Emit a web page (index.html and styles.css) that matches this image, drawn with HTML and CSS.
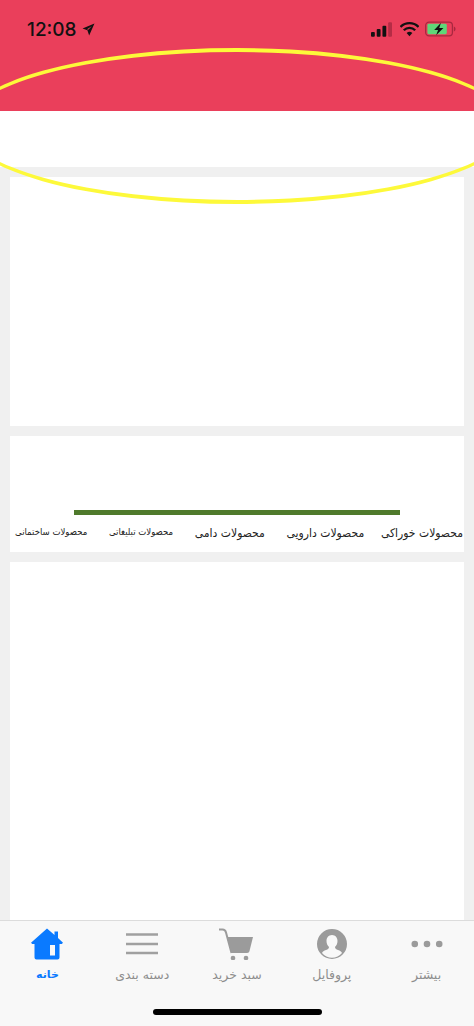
FILE: index.html
```html
<!DOCTYPE html>
<html lang="fa">
<head>
    <meta charset="UTF-8">
    <meta name="viewport" content="width=device-width, initial-scale=1.0">
    <title>Home</title>
    <link rel="stylesheet" href="styles.css">
</head>
<body>

<div class="screen">
    <!-- Red header with status bar -->
    <header class="header">
        <div class="status-bar">
            <div class="status-left">
                <span class="clock">12:08</span>
                <svg class="arrow" viewBox="0 0 12 12"><path d="M11.500 .5 .5 5 5 6.600 6.600 11.500Z M9 3 4.600 5.700 5.800 6.300Z" fill="#111" fill-rule="evenodd"/></svg>
            </div>
            <div class="status-right">
                <svg class="signal" viewBox="0 0 22 15">
                    <rect x="0" y="10" width="4" height="5" rx="1" fill="#111"/>
                    <rect x="6" y="7" width="4" height="8" rx="1" fill="#111"/>
                    <rect x="12" y="3.500" width="4" height="11.500" rx="1" fill="#111"/>
                    <rect x="18" y="0" width="4" height="15" rx="1" fill="#b52c45"/>
                </svg>
                <svg class="wifi" viewBox="0 0 20 15">
                    <path d="M.5 4.800A13.500 13.500 0 0 1 19.500 4.800" fill="none" stroke="#111" stroke-width="2.400"/>
                    <path d="M4 8.300A8.500 8.500 0 0 1 16 8.300" fill="none" stroke="#111" stroke-width="2.400"/>
                    <path d="M7 11.300 10 14.500 13 11.300A4.300 4.300 0 0 0 7 11.300Z" fill="#111"/>
                </svg>
                <svg class="battery" viewBox="0 0 32 16">
                    <rect x=".7" y="1" width="27.600" height="14" rx="3.500" fill="none" stroke="#a8283f" stroke-width="1.300"/>
                    <rect x="2.500" y="2.700" width="20" height="10.600" rx="1.500" fill="#5fd778"/>
                    <path d="M29.800 5.500C31 6 31.500 7 31.500 8S31 10 29.800 10.500Z" fill="#a8283f"/>
                    <path d="M16.500 1.500 9.500 9H13.500L11.500 14.500 19 7H14.700Z" fill="#111"/>
                </svg>
            </div>
        </div>
    </header>

    <div class="search-strip"></div>

    <main class="content">
        <section class="card card-slider"></section>

        <section class="card card-categories">
            <div class="green-bar"></div>
            <div class="categories">
                <span class="category">محصولات خوراکی</span>
                <span class="category">محصولات دارویی</span>
                <span class="category">محصولات دامی</span>
                <span class="category small">محصولات تبلیغاتی</span>
                <span class="category small">محصولات ساختمانی</span>
            </div>
        </section>

        <section class="card card-list"></section>
    </main>

    <!-- Bottom tabs -->
    <nav class="tabbar">
        <div class="tab active">
            <svg viewBox="0 0 32 32"><path d="M16 .500 23.500 7V3.500H27V10L32 14.800 30.800 16H28.500V29.500A2 2 0 0 1 26.500 31.500H5.500A2 2 0 0 1 3.500 29.500V16H1.200L0 14.800Z M19 17V27.500H24V17Z" fill="#0a7aff" fill-rule="evenodd"/></svg>
            <span>خانه</span>
        </div>
        <div class="tab">
            <svg viewBox="0 0 32 32"><path d="M0 6.500H32M0 16H32M0 25H32" stroke="#a0a0a0" stroke-width="2.600" fill="none"/></svg>
            <span>دسته بندی</span>
        </div>
        <div class="tab">
            <svg class="cart" viewBox="0 0 36 32"><path d="M0 1.500H3.500C5.500 1.500 6.500 2.500 7 4.500L12.500 25" stroke="#9b9b9b" stroke-width="2" fill="none"/><path d="M8 9H34L30.500 23C30.200 24.300 29.500 25 28 25H12.500Z" fill="#9b9b9b"/><circle cx="14" cy="30" r="2.300" fill="#9b9b9b"/><circle cx="27" cy="30" r="2.300" fill="#9b9b9b"/></svg>
            <span>سبد خرید</span>
        </div>
        <div class="tab">
            <svg viewBox="0 0 32 32"><path d="M16 1A15 15 0 1 0 16 31 15 15 0 1 0 16 1Z M16 7C19.500 7 21.500 9.800 21.500 13 21.500 15.500 20.500 17.500 19 19 19 20.500 20 21.300 22 22 24 22.800 25.500 23.500 26 25A13 13 0 0 1 6 25C6.500 23.500 8 22.800 10 22 12 21.300 13 20.500 13 19 11.500 17.500 10.500 15.500 10.500 13 10.500 9.800 12.500 7 16 7Z" fill="#9b9b9b" fill-rule="evenodd"/></svg>
            <span>پروفایل</span>
        </div>
        <div class="tab">
            <svg viewBox="0 0 34 32"><circle cx="4" cy="16" r="3.500" fill="#9b9b9b"/><circle cx="17" cy="16" r="3.500" fill="#9b9b9b"/><circle cx="30" cy="16" r="3.500" fill="#9b9b9b"/></svg>
            <span>بیشتر</span>
        </div>
        <div class="home-indicator"></div>
    </nav>

    <!-- Yellow ring lying over the top of the page -->
    <div class="ring"></div>
</div>

</body>
</html>
```

FILE: styles.css
```css
/* Page frame */
html, body {
    margin: 0;
    padding: 0;
    height: 1026px;
    overflow: hidden;
}

.screen {
    position: relative;
    width: 474px;
    height: 1026px;
    overflow: hidden;
    display: flex;
    flex-direction: column;
    background-color: #f0f0f0;
    font-family: "DejaVu Sans", "Noto Sans", sans-serif;
}

/* Header */
.header {
    height: 111px;
    flex-shrink: 0;
    background-color: #ea3f5b;
}

.status-bar {
    display: flex;
    justify-content: space-between;
    align-items: center;
    padding: 18px 18px 0 27px;
    height: 22px;
}

.status-left, .status-right {
    display: flex;
    align-items: center;
}

.clock {
    font-family: Inter, "Liberation Sans", sans-serif;
    font-size: 19px;
    font-weight: 500;
    color: #111;
}

.arrow {
    width: 13px;
    height: 13px;
    margin-left: 5px;
}

.signal {
    width: 21px;
    height: 15px;
}

.wifi {
    width: 19px;
    height: 15px;
    margin-left: 8px;
}

.battery {
    width: 31px;
    height: 16px;
    margin-left: 6px;
}

.search-strip {
    height: 56px;
    flex-shrink: 0;
    background-color: #fff;
}

/* Cards */
.content {
    flex: 1;
    display: flex;
    flex-direction: column;
    gap: 10px;
    padding: 10px 10px 0;
}

.card {
    background-color: #fff;
}

.card-slider {
    height: 249px;
}

.card-categories {
    height: 116px;
    display: flex;
    flex-direction: column;
    align-items: center;
    padding-top: 74px;
    box-sizing: border-box;
}

.green-bar {
    width: 326px;
    height: 5px;
    background-color: #4f7a2c;
}

.categories {
    align-self: stretch;
    display: flex;
    direction: rtl;
    justify-content: space-between;
    align-items: center;
    height: 24px;
    margin-top: 6px;
    padding: 0 1px 0 5px;
    font-family: "DejaVu Sans Condensed", "DejaVu Sans", sans-serif;
}

.category {
    font-size: 12px;
    color: #222;
    white-space: nowrap;
}

.category:first-child {
    margin-left: -5px;
}

.category.small {
    font-size: 9.500px;
    margin-top: -3px;
}

.card-list {
    flex: 1;
}

/* Tab bar */
.tabbar {
    position: relative;
    height: 106px;
    flex-shrink: 0;
    box-sizing: border-box;
    display: grid;
    grid-template-columns: repeat(5, 1fr);
    background-color: #f8f8f8;
    border-top: 1px solid #dcdcdc;
    padding-top: 7px;
}

.tab {
    display: flex;
    flex-direction: column;
    align-items: center;
    gap: 7px;
    font-size: 12.500px;
    color: #8e8e8e;
}

.tab svg {
    width: 32px;
    height: 32px;
}

.tab svg.cart {
    width: 36px;
}

.tab.active {
    color: #0a7aff;
    font-weight: bold;
    font-size: 11px;
}

.tab.active span {
    line-height: 15px;
}

.home-indicator {
    position: absolute;
    left: 153px;
    bottom: 11px;
    width: 169px;
    height: 6px;
    border-radius: 3px;
    background-color: #000;
}

/* Yellow ring */
.ring {
    position: absolute;
    left: -38px;
    top: 48px;
    width: 550px;
    height: 156px;
    box-sizing: border-box;
    border: 4px solid #fdf93a;
    border-radius: 50%;
    pointer-events: none;
}
```
